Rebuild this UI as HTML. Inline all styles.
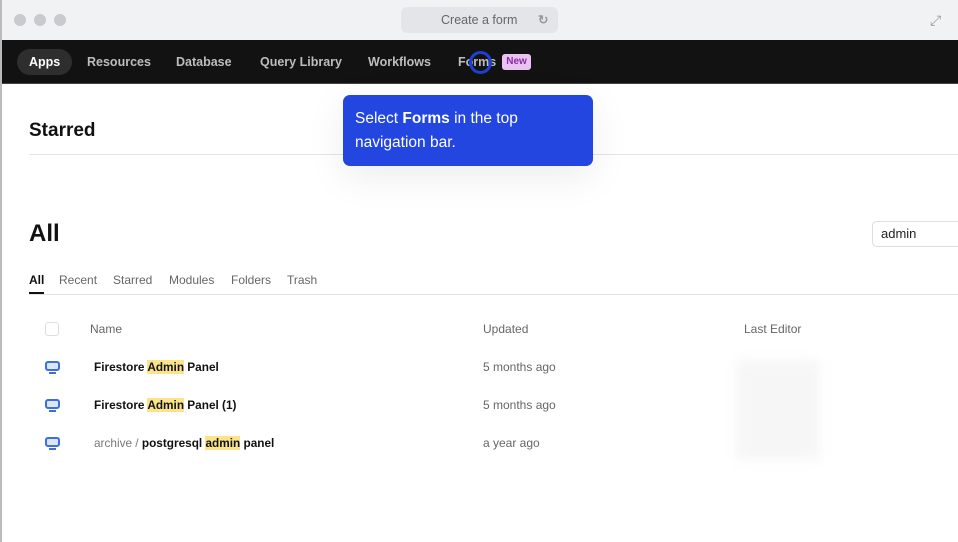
<!DOCTYPE html><html><head><style>
*{margin:0;padding:0;box-sizing:border-box}
body{width:958px;height:542px;overflow:hidden;background:#fff;font-family:"Liberation Sans",sans-serif;position:relative}
.title{position:absolute;left:0;top:0;width:958px;height:40px;background:#f1f2f4}
.dot{position:absolute;top:14px;width:12px;height:12px;border-radius:50%;background:#c9cacd}
.url{position:absolute;left:401px;top:7px;width:157px;height:26px;background:#e4e5e8;border-radius:6px;color:#666;font-size:12.5px;line-height:26px;padding-left:40px}
.nav{position:absolute;left:0;top:40px;width:958px;height:44px;background:#121212;border-bottom:1px solid #444}
.nav span{position:absolute;top:0;line-height:44px;color:#bdbdbd;font-size:12.5px;font-weight:bold}
.apps{position:absolute;left:17px;top:9px;width:55px;height:26px;background:#2e2e2e;border-radius:13px}
.h{position:absolute;color:#111;font-weight:bold}
.line{position:absolute;height:1px;background:#e4e4e4}
.tab{position:absolute;top:273px;font-size:12px;color:#666}
.row{position:absolute;font-size:11.8px;line-height:14px;color:#111;font-weight:bold}
.hl{background:#fbe38a}
.gray{color:#777}
.ic{position:absolute;left:45px;width:15px;height:10px;border:2px solid #3c6fd8;background:#dbe6fb;border-radius:3px}
.ic:after{content:"";position:absolute;left:2px;bottom:-5px;width:7px;height:2px;background:#3c6fd8}
</style></head><body>
<div class="title">
<div class="dot" style="left:14px"></div><div class="dot" style="left:34px"></div><div class="dot" style="left:54px"></div>
<div class="url">Create a form <span style="position:absolute;left:137px;color:#999;font-weight:bold">↻</span></div>
<div style="position:absolute;left:930px;top:12px;color:#999;font-size:14px">⤢</div>
</div>
<div class="nav">
<div class="apps"></div>
<span style="left:29px;color:#fff">Apps</span>
<span style="left:87px">Resources</span>
<span style="left:176px">Database</span>
<span style="left:260px">Query Library</span>
<span style="left:368px">Workflows</span>
<span style="left:458px">Forms</span>
<div style="position:absolute;left:502px;top:14px;width:29px;height:16px;background:#e9c4f0;border-radius:3px;color:#8a2aa8;font-size:10px;font-weight:bold;text-align:center;line-height:16px">New</div>
<div style="position:absolute;left:469px;top:11px;width:23px;height:23px;border:3px solid #1e3fd4;border-radius:50%"></div>
</div>
<div style="position:absolute;left:0;top:0;width:2px;height:542px;background:#bbb"></div>
<div class="h" style="left:29px;top:120px;font-size:19px">Starred</div>
<div class="line" style="left:29px;top:154px;width:929px"></div>
<div style="position:absolute;left:343px;top:95px;width:250px;height:71px;background:#2346e0;border-radius:7px;color:#fff;font-size:15.5px;line-height:24px;padding:12px 12px;box-shadow:0 10px 40px rgba(0,0,0,.08)">Select <b>Forms</b> in the top navigation bar.</div>
<div class="h" style="left:29px;top:220px;font-size:24px">All</div>
<div style="position:absolute;left:872px;top:221px;width:100px;height:26px;border:1px solid #ddd;border-radius:5px;font-size:13px;line-height:24px;padding-left:8px;color:#222">admin</div>
<div class="tab" style="left:29px;color:#111;font-weight:bold">All</div>
<div style="position:absolute;left:29px;top:292px;width:15px;height:2px;background:#111"></div>
<div class="tab" style="left:59px">Recent</div>
<div class="tab" style="left:113px">Starred</div>
<div class="tab" style="left:169px">Modules</div>
<div class="tab" style="left:231px">Folders</div>
<div class="tab" style="left:287px">Trash</div>
<div class="line" style="left:29px;top:294px;width:929px"></div>
<div style="position:absolute;left:45px;top:322px;width:14px;height:14px;border:1px solid #ddd;border-radius:3px"></div>
<div class="tab" style="left:90px;top:322px">Name</div>
<div class="tab" style="left:483px;top:322px">Updated</div>
<div class="tab" style="left:744px;top:322px">Last Editor</div>
<div class="ic" style="top:361px"></div><div class="row" style="left:94px;top:360px">Firestore <span class="hl">Admin</span> Panel</div><div class="tab" style="left:483px;top:360px">5 months ago</div>
<div class="ic" style="top:399px"></div><div class="row" style="left:94px;top:398px">Firestore <span class="hl">Admin</span> Panel (1)</div><div class="tab" style="left:483px;top:398px">5 months ago</div>
<div class="ic" style="top:437px"></div><div class="row" style="left:94px;top:436px"><span class="gray" style="font-weight:normal">archive / </span>postgresql <span class="hl">admin</span> panel</div><div class="tab" style="left:483px;top:436px">a year ago</div>
<div style="position:absolute;left:736px;top:360px;width:84px;height:100px;background:#f6f6f6;filter:blur(6px)"></div>
</body></html>
